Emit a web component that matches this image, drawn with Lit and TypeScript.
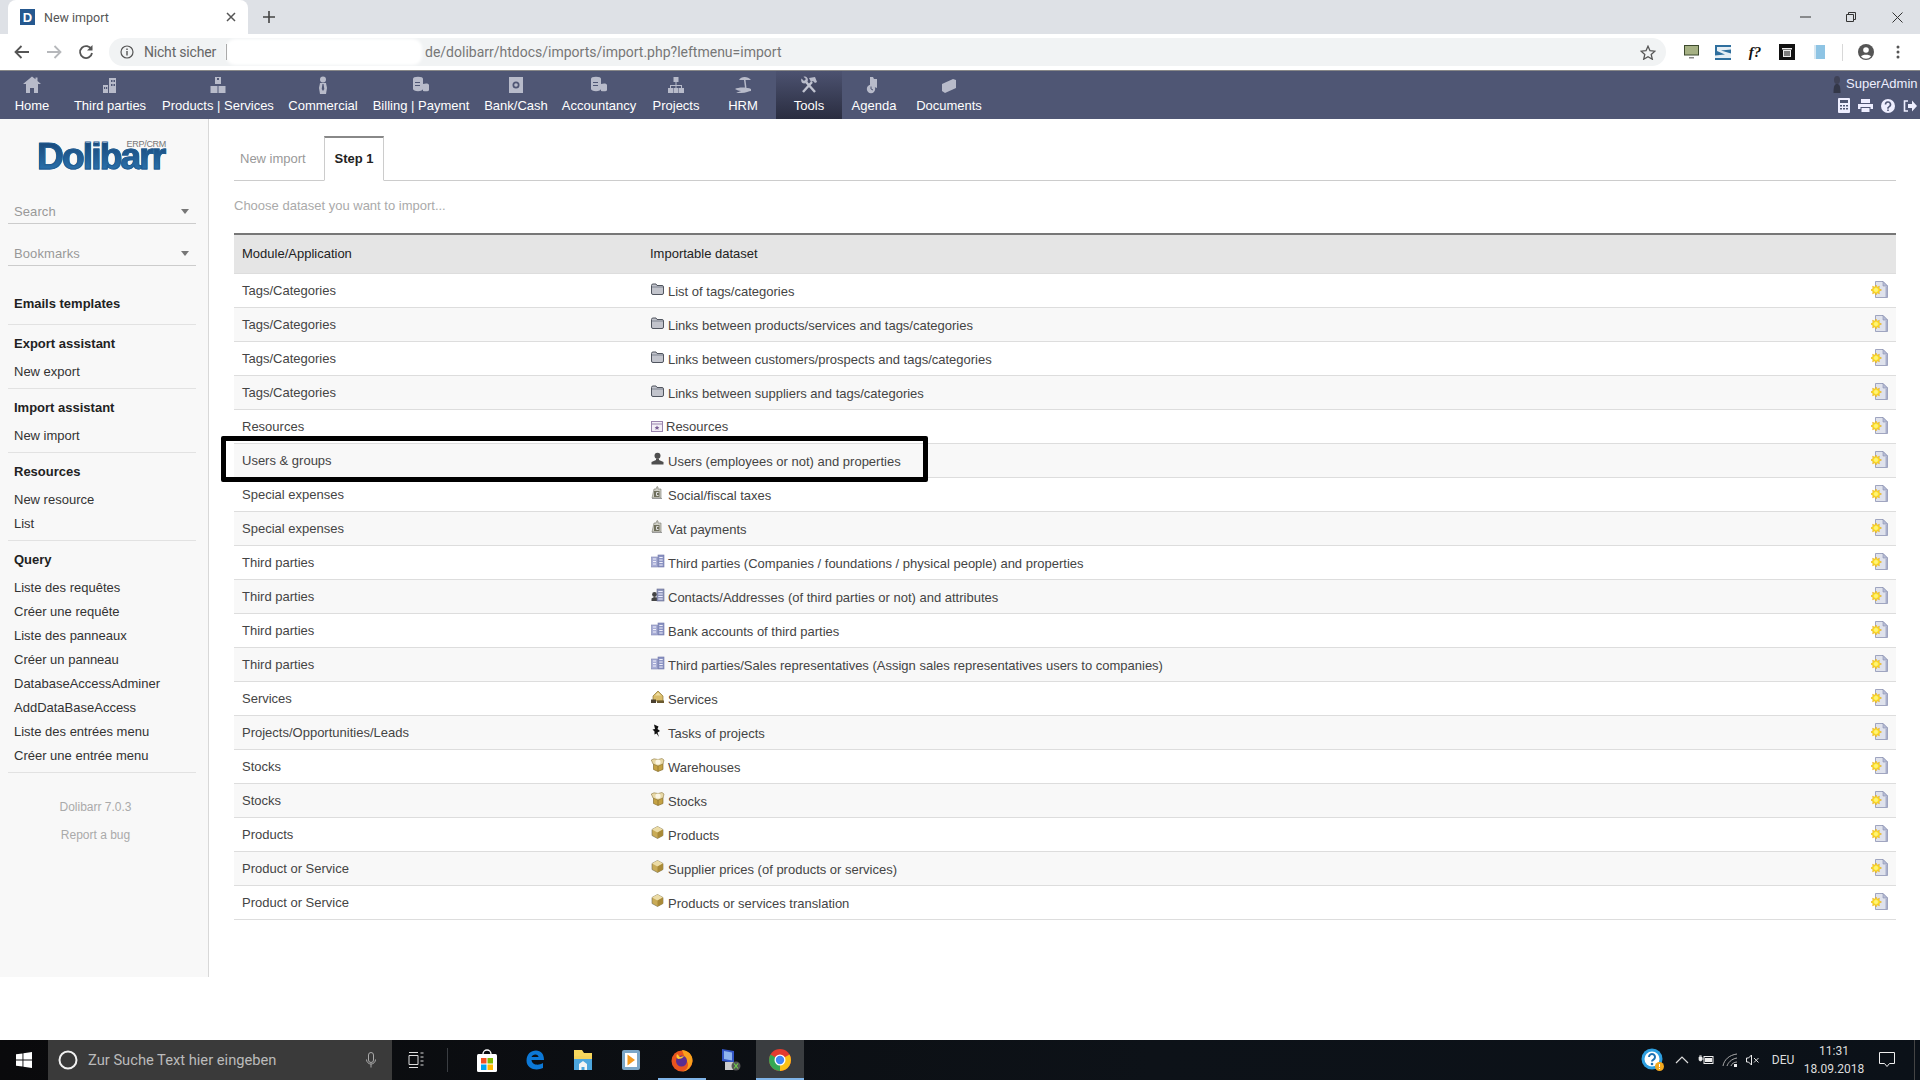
import { LitElement, html, css, svg } from "lit";
import { customElement } from "lit/decorators.js";

const navIcons: Record<string, any> = {
  home: svg`<path d="M9 .5 0 8h3v9h4v-5h4v5h4V8h3l-3.500-3V1.500h-2v1.800z"/>`,
  third: svg`<path d="M2 9h5v8H2zM8 2h7v15H8z"/><path fill="#4f5674" d="M10 4h1.500v2H10zM12.500 4H14v2h-1.500zM10 8h1.500v2H10zM12.500 8H14v2h-1.500zM3 11h1.200v2H3zM5 11h1.200v2H5z"/>`,
  products: svg`<path d="M6 1h6v7H6zM1.500 10h7v7h-7zM9.500 10h7v7h-7z"/><path fill="#4f5674" d="M8 2h2v2H8z"/>`,
  commercial: svg`<circle cx="9" cy="3.500" r="3"/><path d="M6 7h6l1 5-1 6H6l-1-6z"/><path fill="#4f5674" d="M8.500 8h1l.8 5-1.300 2-1.300-2z"/>`,
  billing: svg`<ellipse cx="6" cy="3" rx="5" ry="2.200"/><path d="M1 3v10c0 1.200 2.200 2.200 5 2.200s5-1 5-2.200V3z"/><path d="M11 8c3-1 6-.5 6 1v5c0 1.200-2.500 1.500-6 1z"/><path fill="#4f5674" d="M3 6h5v1H3zM3 9h5v1H3z"/>`,
  bank: svg`<path d="M2 1h14v16H2z"/><circle cx="9" cy="9" r="3.500" fill="#4f5674"/><circle cx="9" cy="9" r="1.800"/>`,
  projects: svg`<path d="M6.500 1h5v5h-5zM1 12h5v5H1zM6.500 12h5v5h-5zM12 12h5v5h-5zM8.500 6h1v3H15v3h-1V10H9.500v2h-1v-2H4v2H3V9h5.500z"/>`,
  hrm: svg`<path d="M5 4C7 0 14 0 17 4zM10 4h1.500l1 8H11zM1 13c3-2 12-2 16 0v2c-2 0-5 2-10 2H2c2-1 5-2 5-2-2 0-4-1-6-2z"/>`,
  tools: svg`<path d="M3 16 12 6" stroke="#c0c3d0" stroke-width="2.400" fill="none"/><path d="M9 2l6-1 2 5-2 1-2-2-2 1z"/><path d="M15 16 6 6" stroke="#c0c3d0" stroke-width="2.400" fill="none"/><path d="M1.500 2.500 4 5 6 3 3.500.8C6-.5 9 2 7.500 5.500 7 7 4 8 2.500 7 1 5.500 1 4 1.500 2.500z"/>`,
  agenda: svg`<path d="M5 1h3l1 2h3v9a5 5 0 0 0-7 2z"/><circle cx="6" cy="13" r="4.200"/><path fill="none" stroke="#4f5674" d="M6 10.500V13l2 1"/>`,
  documents: svg`<path d="M2 8 13 3l3 1v8L5 17l-3-2z"/><path fill="#4f5674" d="M8 3l3-1.500 2 1-5 2z"/>`,
};

const navItems = [
  ["Home", "home", 64], ["Third parties", "third", 92], ["Products | Services", "products", 124],
  ["Commercial", "commercial", 86], ["Billing | Payment", "billing", 110], ["Bank/Cash", "bank", 80],
  ["Accountancy", "billing", 86], ["Projects", "projects", 68], ["HRM", "hrm", 66], ["Tools", "tools", 66],
  ["Agenda", "agenda", 64], ["Documents", "documents", 86],
] as [string, string, number][];

const rowIcons: Record<string, any> = {
  folder: svg`<path d="M.5 3.500A1.500 1.500 0 0 1 2 2h3l1 1.500h5A1.500 1.500 0 0 1 12.500 5v6A1.500 1.500 0 0 1 11 12.500H2A1.500 1.500 0 0 1 .5 11z" fill="#c2c4cc" stroke="#50555f"/><path d="M1 5h11" stroke="#7f8490" fill="none"/>`,
  resource: svg`<rect x=".5" y="1.500" width="11" height="10" fill="#f3eef6" stroke="#9a84ae"/><path d="M.5 4h11" stroke="#9a84ae"/><path d="M6 5.500l.8 1.500 1.600.2-1.200 1 .4 1.600L6 9l-1.600.8.4-1.600-1.200-1 1.600-.2z" fill="#7b5e96"/>`,
  user: svg`<circle cx="6.500" cy="3.800" r="3" fill="#4f4f4f"/><path d="M5 6.500h3v1.500l4.500 2V12.500H.5V10L5 8z" fill="#4f4f4f"/>`,
  tax: svg`<path d="M3 3h2l1-2.500 1 .5V3h3v9H1z" fill="#cfcfc6" stroke="#77776c" stroke-width=".6"/><rect x="3" y="5" width="5.500" height="6" fill="#6f6f5c"/><path d="M7.500 6.500H5.500v3h2" fill="none" stroke="#ddd"/><path d="M1 12.500h10" stroke="#999"/>`,
  company: svg`<rect x=".5" y="3" width="6" height="10" fill="#a8add6" stroke="#7f85b3" stroke-width=".6"/><rect x="7" y="1" width="6" height="12" fill="#8c94c4" stroke="#6f75a8" stroke-width=".6"/><path d="M2 5h3M2 7.500h3M2 10h3M8.300 3.500h3.400M8.300 6h3.400M8.300 8.500h3.400M8.300 11h3.400" stroke="#f0f0fa"/>`,
  contact: svg`<circle cx="3.500" cy="6.500" r="2.400" fill="#444"/><path d="M.5 13v-2.500L3 9l3 .5V13z" fill="#444"/><rect x="6" y="1" width="7" height="12" fill="#8f96bb" stroke="#666c90" stroke-width=".6"/><path d="M7.300 3.500h4.400M7.300 6h4.400M7.300 8.500h4.400M7.300 11h4.400" stroke="#eef"/>`,
  service: svg`<path d="M2 6l5-5 5 5v5H2z" fill="#d9bc6a" stroke="#8c7430" stroke-width=".7"/><path d="M4 5.500l3-3 3 3z" fill="#f0dfa2"/><rect y="9.500" width="5" height="3.500" fill="#4a4030"/><rect x="6" y="10.500" width="7" height="2.500" fill="#6b5a30"/>`,
  pin: svg`<path d="M3 .5 7.500 2.500 6.500 5l2.500 2-2.500 1.500L8 13 5.500 9.500 3.500 10.500 3.500 7.500 1.500 5.500 4 5z" fill="#111"/>`,
  open: svg`<path d="M2.500 5.500h9.500v6L7 13.500l-4.500-2z" fill="#c4a244" stroke="#7a6222" stroke-width=".6"/><path d="M.3 2 3 .8 7 1.500 11 .5 13 2 12 6 7 8 2 6z" fill="#e8d9a8" stroke="#7a6222" stroke-width=".5"/><circle cx="7" cy="4" r="2.600" fill="#fbf6e4"/><path d="M7 8v5.500" stroke="#8a6f2a" stroke-width=".7"/>`,
  cube: svg`<path d="M6.500 .5l5.500 3v6l-5.500 3-5.500-3v-6z" fill="#c9ab56" stroke="#6f6a50" stroke-width=".6"/><path d="M1 3.500l5.500 3 5.500-3-5.500-3z" fill="#ecdca6"/><path d="M6.500 6.500v6l5.500-3v-6z" fill="#a98a38"/>`,
};

const rows: [string, string, string][] = [
  ["Tags/Categories", "folder", "List of tags/categories"],
  ["Tags/Categories", "folder", "Links between products/services and tags/categories"],
  ["Tags/Categories", "folder", "Links between customers/prospects and tags/categories"],
  ["Tags/Categories", "folder", "Links between suppliers and tags/categories"],
  ["Resources", "resource", "Resources"],
  ["Users & groups", "user", "Users (employees or not) and properties"],
  ["Special expenses", "tax", "Social/fiscal taxes"],
  ["Special expenses", "tax", "Vat payments"],
  ["Third parties", "company", "Third parties (Companies / foundations / physical people) and properties"],
  ["Third parties", "contact", "Contacts/Addresses (of third parties or not) and attributes"],
  ["Third parties", "company", "Bank accounts of third parties"],
  ["Third parties", "company", "Third parties/Sales representatives (Assign sales representatives users to companies)"],
  ["Services", "service", "Services"],
  ["Projects/Opportunities/Leads", "pin", "Tasks of projects"],
  ["Stocks", "open", "Warehouses"],
  ["Stocks", "open", "Stocks"],
  ["Products", "cube", "Products"],
  ["Product or Service", "cube", "Supplier prices (of products or services)"],
  ["Product or Service", "cube", "Products or services translation"],
];

const menu: { title: string; items: string[] }[] = [
  { title: "Emails templates", items: [] },
  { title: "Export assistant", items: ["New export"] },
  { title: "Import assistant", items: ["New import"] },
  { title: "Resources", items: ["New resource", "List"] },
  { title: "Query", items: ["Liste des requêtes", "Créer une requête", "Liste des panneaux", "Créer un panneau", "DatabaseAccessAdminer", "AddDataBaseAccess", "Liste des entrées menu", "Créer une entrée menu"] },
];

@customElement("app-root")
export class AppRoot extends LitElement {
  static styles = css`
    :host { display: block; width: 1920px; height: 1080px; overflow: hidden; background: #fff; font-family: "Liberation Sans", Arial, sans-serif; font-size: 13px; color: #444; }
    .page { display: flex; flex-direction: column; height: 1080px; }
    svg { display: block; }

    .strip { height: 34px; background: #dee1e6; display: flex; align-items: stretch; flex: none; padding-left: 8px; font-family: Roboto, sans-serif; }
    .tab { width: 240px; background: #fff; border-radius: 8px 8px 0 0; display: flex; align-items: center; padding: 0 12px; box-sizing: border-box; color: #555; font-size: 12.500px; }
    .fav { width: 15px; height: 16px; background: #25588f; color: #fff; font: bold 13px "Liberation Sans", sans-serif; display: flex; align-items: center; justify-content: center; margin-right: 9px; flex: none; }
    .tab-title { flex: 1; }
    .plus { width: 42px; display: flex; align-items: center; justify-content: center; }
    .winbtns { margin-left: auto; display: flex; align-items: center; }
    .winbtn { width: 46px; display: flex; justify-content: center; }

    .toolbar { height: 36px; background: #fff; display: flex; align-items: center; flex: none; padding-left: 6px; font-family: Roboto, sans-serif; }
    .slot { width: 32px; height: 28px; display: flex; align-items: center; justify-content: center; flex: none; }
    .fq { font: italic bold 15px "Liberation Serif", serif; color: #111; }
    .addr { position: relative; width: 1557px; height: 28px; margin-left: 7px; background: #f1f3f4; border-radius: 14px; display: flex; align-items: center; box-sizing: border-box; flex: none; font-size: 14px; color: #777; white-space: nowrap; }
    .addr .info { width: 35px; display: flex; justify-content: center; flex: none; }
    .addr .sec { width: 82px; flex: none; color: #666; letter-spacing: -0.2px; }
    .addr .url { margin-left: 199px; flex: 1; }
    .addr .star { width: 34px; display: flex; justify-content: center; flex: none; padding-right: 1px; }
    .smudge { position: absolute; left: 117px; top: 1px; width: 196px; height: 26px; background: #fff; border-radius: 9px; filter: blur(1.500px); }
    .sep { position: absolute; left: 117px; top: 6px; width: 1px; height: 16px; background: #aaa; }
    .exts { display: flex; margin-left: 9px; }
    .tdiv { width: 15px; display: flex; justify-content: center; flex: none; }
    .tdiv i { display: block; width: 1px; height: 17px; background: #d8d8d8; }

    .nav { height: 49px; flex: none; background: #4f5674; border-top: 1px solid #888; box-sizing: border-box; display: flex; color: #fff; font-size: 13px; }
    .nitem { display: flex; flex-direction: column; align-items: center; flex: none; height: 48px; padding-top: 5px; box-sizing: border-box; }
    .nitem.on { background: linear-gradient(#4c5270, #2a2d40); }
    .nitem svg { fill: #b8bbca; width: 18px; height: 18px; }
    .nitem span { margin-top: 3px; line-height: 18px; white-space: nowrap; }
    .nright { margin-left: auto; width: 87px; display: flex; flex-direction: column; padding-top: 3px; }
    .uname { display: flex; align-items: center; gap: 4px; height: 20px; line-height: 20px; white-space: nowrap; color: #eef; }
    .uname svg { flex: none; margin-left: -1px; }
    .ricons { display: flex; margin-top: 4px; align-items: center; gap: 8px; padding-left: 5px; }

    .body { flex: none; height: 858px; display: flex; }
    .side { width: 209px; flex: none; box-sizing: border-box; background: #f8f8f8; border-right: 1px solid #d8d8d8; }
    .logo { height: 28px; margin: 24px 0 0 37px; position: relative; width: 134px; }
    .logo b { display: block; font: bold 37px/28px "Liberation Sans", sans-serif; letter-spacing: -1.800px; background: linear-gradient(#1a4a7c, #2a72ad); -webkit-background-clip: text; background-clip: text; color: transparent; -webkit-text-stroke: 1px #1f5c92; white-space: nowrap; }
    .logo small { position: absolute; right: 5px; top: -3px; font-size: 9px; line-height: 9px; color: #777; letter-spacing: -0.3px; }
    .field { margin: 0 12px 0 8px; height: 25px; box-sizing: border-box; border-bottom: 1px solid #ccc; display: flex; align-items: center; justify-content: space-between; padding: 0 7px 0 6px; color: #999; letter-spacing: 0.1px; }
    .field.f1 { margin-top: 28px; }
    .field.f2 { margin-top: 17px; }
    .arrow { width: 0; height: 0; border-left: 4px solid transparent; border-right: 4px solid transparent; border-top: 5px solid #777; }
    .blocks { margin-top: 19px; }
    .block { margin: 0 12px 0 8px; padding: 7px 0 4px 6px; border-bottom: 1px solid #e2e2e2; color: #333; }
    .block.solo { padding-bottom: 8px; }
    .btitle { height: 24px; line-height: 24px; font-weight: bold; color: #222; }
    .bitems { margin-top: 4px; }
    .bitem { height: 24px; line-height: 24px; white-space: nowrap; }
    .foot { margin-top: 24px; text-align: center; color: #aaa; font-size: 12px; padding-right: 17px; }
    .foot div { height: 20px; line-height: 20px; margin-bottom: 8px; }

    .main { flex: 1; min-width: 0; padding: 17px 24px 0 25px; box-sizing: border-box; }
    .tabs { height: 45px; box-sizing: border-box; border-bottom: 1px solid #ccc; display: flex; }
    .t1 { width: 90px; padding-left: 6px; box-sizing: border-box; line-height: 45px; color: #999; }
    .t2 { width: 60px; height: 45px; box-sizing: border-box; border: 1px solid #ccc; border-top: 2px solid #888; border-bottom: 1px solid #fff; background: #fff; text-align: center; line-height: 41px; font-weight: bold; color: #222; }
    .desc { margin-top: 15px; height: 20px; line-height: 20px; color: #aaa; }
    .table { position: relative; margin-top: 17px; border-top: 2px solid #777; }
    .row { display: grid; grid-template-columns: 408px 1fr 38px; height: 34px; box-sizing: border-box; border-bottom: 1px solid #ddd; align-items: center; }
    .row.head { height: 39px; background: #e5e5e5; color: #222; padding-bottom: 2px; }
    .row.alt { background: #f8f8f8; }
    .row:last-of-type { border-bottom-color: #c4c4c4; }
    .cell { padding-left: 8px; white-space: nowrap; }
    .ds { display: flex; align-items: center; padding-left: 9px; padding-top: 2px; }
    .ds.resource { padding-top: 0; }
    .head .ds { padding-top: 0; padding-left: 8px; }
    .ic { width: 13px; height: 13px; margin-right: 4px; flex: none; transform: translateY(-3px); overflow: visible; }
    .ic.resource { margin-right: 2px; transform: translateY(0); }
    .act { display: flex; padding-left: 13px; }
    .act svg { margin-top: -3px; }
    .mark { position: absolute; left: -13px; top: 201px; width: 707px; height: 46px; box-sizing: border-box; border: 5px solid #000; border-radius: 2px; }

    .gap { flex: 1; background: #fff; }
    .task { height: 40px; flex: none; background: linear-gradient(90deg, #0a0a0c, #0d1218 60%, #0b1118); display: flex; align-items: stretch; color: #ddd; font-family: Roboto, sans-serif; }
    .ts { width: 48px; display: flex; align-items: center; justify-content: center; flex: none; }
    .search { width: 344px; flex: none; background: #3a3a3a; display: flex; align-items: center; box-sizing: border-box; color: #bbb; font-size: 14.700px; }
    .search .c { width: 40px; display: flex; justify-content: center; flex: none; }
    .search .t { flex: 1; }
    .search .m { width: 42px; display: flex; justify-content: center; flex: none; }
    .tbd { width: 15px; display: flex; align-items: center; justify-content: center; flex: none; }
    .tbd i { display: block; width: 1px; height: 24px; background: #3a3d42; }
    .ts.first { margin-left: 8px; }
    .ts.ff { margin-left: 3px; box-shadow: inset 0 -2px 0 #7fb4e8; }
    .ts.net { margin-left: 1px; }
    .ts.cr { margin-left: 1px; background: #3a3d40; box-shadow: inset 0 -2px 0 #7fb4e8; }
    .tray { margin-left: auto; display: flex; align-items: stretch; font-size: 12px; }
    .tr { display: flex; align-items: center; justify-content: center; flex: none; }
    .w20 { width: 20px; }
    .w22 { width: 22px; }
    .w26 { width: 26px; }
    .w32 { width: 32px; }
    .w40 { width: 40px; }
    .w44 { width: 44px; }
    .clock { width: 62px; flex-direction: column; line-height: 18px; font-size: 12px; text-align: center; }
    .edge { width: 11px; display: flex; justify-content: center; }
    .edge i { display: block; width: 1px; height: 40px; background: #444; }
  `;

  private action() {
    return html`<svg width="17" height="17" viewBox="0 0 17 17"><path d="M4.500.5h7.500l4.500 4.500v11.500H4.500z" fill="#dfe2ec" stroke="#8c92b2" stroke-width=".8"/><path d="M12 .5v4.500h4.500z" fill="#b8bed6" stroke="#8c92b2" stroke-width=".6"/><path d="M14.500 5.500v10.500h1.500V5.500z" fill="#aab0cc"/><path d="M5 4l1.100 2.300 2.300-1-.5 2.300L10.500 9 7.900 10.400l.5 2.300-2.300-1L5 14l-1.100-2.300-2.300 1 .5-2.300L-.5 9l2.600-1.400-.5-2.300 2.300 1z" fill="#fce22c" stroke="#e8a818" stroke-width=".6"/><circle cx="5" cy="9" r="2" fill="#fff27a"/></svg>`;
  }

  private ico(w: number, h: number, body: any) {
    return html`<svg width=${w} height=${h} viewBox="0 0 ${w} ${h}">${body}</svg>`;
  }

  render() {
    return html`<div class="page">
      <div class="strip">
        <div class="tab">
          <div class="fav">D</div>
          <div class="tab-title">New import</div>
          ${this.ico(10, 10, svg`<path d="M1 1l8 8M9 1l-8 8" stroke="#555" stroke-width="1.500"/>`)}
        </div>
        <div class="plus">${this.ico(12, 12, svg`<path d="M6 0v12M0 6h12" stroke="#444" stroke-width="1.600"/>`)}</div>
        <div class="winbtns">
          <div class="winbtn">${this.ico(11, 2, svg`<path d="M0 1h11" stroke="#333"/>`)}</div>
          <div class="winbtn">${this.ico(10, 10, svg`<path d="M.5 2.500h7v7h-7zM2.500 2.500v-2h7v7h-2" fill="none" stroke="#333"/>`)}</div>
          <div class="winbtn">${this.ico(11, 11, svg`<path d="M.5.500l10 10M10.500.500l-10 10" stroke="#333"/>`)}</div>
        </div>
      </div>

      <div class="toolbar">
        <div class="slot">${this.ico(16, 14, svg`<path d="M15 7H2M7.500 1 1.500 7l6 6" fill="none" stroke="#555" stroke-width="1.800"/>`)}</div>
        <div class="slot">${this.ico(16, 14, svg`<path d="M1 7h13M8.500 1l6 6-6 6" fill="none" stroke="#b6b8bb" stroke-width="1.800"/>`)}</div>
        <div class="slot">${this.ico(16, 16, svg`<path d="M13.500 5.500A6 6 0 1 0 14 9" fill="none" stroke="#555" stroke-width="1.800"/><path d="M14.500 1v5.500H9z" fill="#555"/>`)}</div>
        <div class="addr">
          <div class="info">${this.ico(14, 14, svg`<circle cx="7" cy="7" r="6" fill="none" stroke="#555" stroke-width="1.200"/><path d="M7 6v4.500M7 3.500v1.400" stroke="#555" stroke-width="1.400"/>`)}</div>
          <div class="sec">Nicht sicher</div>
          <div class="url">de/dolibarr/htdocs/imports/import.php?leftmenu=import</div>
          <div class="star">${this.ico(16, 15, svg`<path d="M8 1.200l2 4.500 4.900.5-3.700 3.200 1.100 4.800L8 11.700l-4.300 2.500 1.100-4.800L1.100 6.200 6 5.700z" fill="none" stroke="#555" stroke-width="1.300"/>`)}</div>
          <div class="smudge"></div>
          <div class="sep"></div>
        </div>
        <div class="exts">
          <div class="slot">${this.ico(15, 14, svg`<rect width="15" height="10.500" fill="#3d4a2e"/><rect x="1" y="1" width="13" height="8.500" fill="#a6b184"/><path d="M5 12h5v1.500H5z" fill="#888"/>`)}</div>
          <div class="slot">${this.ico(16, 15, svg`<rect width="16" height="15" fill="#2f6f9e"/><path d="M2 2h14v2.500L6 5.500l10 3V13H0v-2.500l10-1L2 6z" fill="#e6eef4"/>`)}</div>
          <div class="slot"><span class="fq">f?</span></div>
          <div class="slot">${this.ico(16, 16, svg`<rect width="16" height="16" fill="#111"/><path d="M3 4h10v1.400H3zM4 6h8v7H4z" fill="#eee"/><path d="M6 7v5M8 7v5M10 7v5" stroke="#111"/>`)}</div>
          <div class="slot">${this.ico(11, 14, svg`<rect width="11" height="14" fill="#8ec4e4"/><rect width="2" height="14" fill="#d8e8f2"/>`)}</div>
        </div>
        <div class="tdiv"><i></i></div>
        <div class="slot">${this.ico(16, 16, svg`<circle cx="8" cy="8" r="8" fill="#555"/><circle cx="8" cy="6" r="2.800" fill="#fff"/><path d="M3 12.500c1-2.500 9-2.500 10 0A6.500 6.500 0 0 1 3 12.500z" fill="#fff"/>`)}</div>
        <div class="slot">${this.ico(4, 14, svg`<circle cx="2" cy="2" r="1.500" fill="#555"/><circle cx="2" cy="7" r="1.500" fill="#555"/><circle cx="2" cy="12" r="1.500" fill="#555"/>`)}</div>
      </div>

      <div class="nav">
        ${navItems.map(([label, ic, w]) => html`<div class="nitem ${label === "Tools" ? "on" : ""}" style="width:${w}px">
          <svg viewBox="0 0 18 18">${navIcons[ic]}</svg><span>${label}</span></div>`)}
        <div class="nright">
          <div class="uname">${this.ico(10, 17, svg`<ellipse cx="5" cy="4" rx="3" ry="4" fill="#3f4256"/><path d="M1.500 17c0-7 1-9 3.500-9s3.500 2 3.500 9z" fill="#333748"/>`)}<span>SuperAdmin</span></div>
          <div class="ricons">
            ${this.ico(12, 15, svg`<rect width="12" height="15" rx="1" fill="#eef"/><path d="M2 2h8v3H2zM2 7h2v1.500H2zM5 7h2v1.500H5zM8 7h2v1.500H8zM2 10h2v1.500H2zM5 10h2v1.500H5zM8 10h2v1.500H8z" fill="#4f5674"/>`)}
            ${this.ico(15, 13, svg`<path d="M3 0h9v4H3zM0 5h15v5h-2.500V8h-10v2H0zM3.500 9h8v4h-8z" fill="#eef"/>`)}
            ${this.ico(14, 14, svg`<circle cx="7" cy="7" r="7" fill="#eef"/><path d="M4.500 5.500a2.500 2.500 0 1 1 3.500 2.300L7 8.800v1" fill="none" stroke="#4f5674" stroke-width="1.600"/><path d="M6.200 10.600h1.600V12H6.200z" fill="#4f5674"/>`)}
            ${this.ico(14, 12, svg`<path d="M5 1H1.500v10H5" fill="none" stroke="#eef" stroke-width="1.600"/><path d="M5 4h4V.5L14 6l-5 5.500V8H5z" fill="#eef"/>`)}
          </div>
        </div>
      </div>

      <div class="body">
        <div class="side">
          <div class="logo"><b>Dolibarr</b><small>ERP/CRM</small></div>
          <div class="field f1"><span>Search</span><div class="arrow"></div></div>
          <div class="field f2"><span>Bookmarks</span><div class="arrow"></div></div>
          <div class="blocks">
            ${menu.map((m) => html`<div class="block ${m.items.length ? "" : "solo"}">
              <div class="btitle">${m.title}</div>
              ${m.items.length ? html`<div class="bitems">${m.items.map((i) => html`<div class="bitem">${i}</div>`)}</div>` : ""}
            </div>`)}
          </div>
          <div class="foot"><div>Dolibarr 7.0.3</div><div>Report a bug</div></div>
        </div>
        <div class="main">
          <div class="tabs"><div class="t1">New import</div><div class="t2">Step 1</div></div>
          <div class="desc">Choose dataset you want to import...</div>
          <div class="table">
            <div class="row head"><div class="cell">Module/Application</div><div class="cell ds">Importable dataset</div><div></div></div>
            ${rows.map(([m, ic, d], i) => html`<div class="row ${i % 2 ? "alt" : ""}">
              <div class="cell">${m}</div>
              <div class="cell ds ${ic}"><svg class="ic ${ic}" viewBox="0 0 13 13">${rowIcons[ic]}</svg><span>${d}</span></div>
              <div class="act">${this.action()}</div>
            </div>`)}
            <div class="mark"></div>
          </div>
        </div>
      </div>

      <div class="gap"></div>

      <div class="task">
        <div class="ts">${this.ico(16, 16, svg`<path d="M0 2.300 6.500 1.400v6.200H0zM7.400 1.300 16 0v7.600H7.400zM0 8.400h6.500v6.200L0 13.700zM7.400 8.400H16V16l-8.600-1.300z" fill="#fff"/>`)}</div>
        <div class="search">
          <div class="c">${this.ico(20, 20, svg`<circle cx="10" cy="10" r="8.500" fill="none" stroke="#f2f2f2" stroke-width="2"/>`)}</div>
          <div class="t">Zur Suche Text hier eingeben</div>
          <div class="m">${this.ico(10, 16, svg`<rect x="2.500" y=".5" width="5" height="10" rx="2.500" fill="none" stroke="#aaa"/><path d="M.5 7.500a4.500 4.500 0 0 0 9 0M5 12v3.500" fill="none" stroke="#aaa"/>`)}</div>
        </div>
        <div class="ts">${this.ico(16, 16, svg`<path d="M1 3.500h9v9H1zM1 .5h9M1 15.500h9M12.500 1h3M12.500 5h3M12.500 9h3M12.500 13h3" fill="none" stroke="#ddd"/>`)}</div>
        <div class="tbd"><i></i></div>
        <div class="ts first">${this.ico(24, 26, svg`<path d="M8 7a4 4 0 0 1 8 0" fill="none" stroke="#fff" stroke-width="1.300"/><rect x="2" y="7" width="20" height="18" rx="1.500" fill="#fff"/><rect x="6" y="11" width="5.500" height="5.500" fill="#f25022"/><rect x="12.500" y="11" width="5.500" height="5.500" fill="#7fba00"/><rect x="6" y="17.500" width="5.500" height="5.500" fill="#00a4ef"/><rect x="12.500" y="17.500" width="5.500" height="5.500" fill="#ffb900"/>`)}</div>
        <div class="ts">${this.ico(22, 24, svg`<path d="M2.500 12.500C2.500 6 7 2.500 12 2.500c5 0 8 3.500 8 9.500H7.500c.3 5 7 6 11.500 3v5c-6 3-16.500 1.500-16.500-7.500zM7.500 9h7c0-3.500-6-3.500-7 0z" fill="#0c78d6"/>`)}</div>
        <div class="ts">${this.ico(22, 24, svg`<path d="M2 2h8l2 3h8v6H2z" fill="#f6d75e"/><rect x="2" y="8" width="18" height="14" fill="#f8e08a"/><rect x="2" y="10" width="18" height="12" fill="#4da6dd"/><path d="M7 22v-6l4-3 4 3v6h-2.500v-3h-3v3z" fill="#f4f4f4"/><rect x="2" y="8" width="18" height="3" fill="#f3d25a"/>`)}</div>
        <div class="ts">${this.ico(20, 24, svg`<rect x="1" y="2" width="18" height="20" rx="2" fill="#7aa6c8"/><rect x="4" y="5" width="12" height="14" fill="#fff"/><path d="M6.500 6.500v11L14 12z" fill="#f39a1f"/>`)}</div>
        <div class="ts ff">${this.ico(24, 26, svg`<circle cx="12" cy="14" r="10.500" fill="#e8541e"/><path d="M12 3c6 0 11 5 10.500 11S16 25 12 24.500c5-1 7-5 5.500-9-.5-2-2-3-2-3z" fill="#f9a01c"/><circle cx="11.500" cy="14" r="5.500" fill="#5a2d91"/><path d="M7 7l3 3 4-1c-1 2-3 3-6 3-1.500-1-2-3-1-5z" fill="#fdc72f"/>`)}</div>
        <div class="ts net">${this.ico(22, 26, svg`<path d="M2 2l12 2v12L2 14z" fill="#3355c4"/><path d="M4 4l8 1.500v8L4 12z" fill="#8fb4ee"/><rect x="5" y="15" width="9" height="8" fill="#ccc"/><circle cx="16" cy="19" r="4.500" fill="#555"/><path d="M14 16.500l4 5M18 16.500l-4 5" stroke="#6fd14a" stroke-width="1.200"/>`)}</div>
        <div class="ts cr">${this.ico(24, 24, svg`<circle cx="12" cy="12" r="11" fill="#e33b2e"/><path d="M12 12 21.500 6.500A11 11 0 0 1 12 23z" fill="#fbc116"/><path d="M12 12 12 23A11 11 0 0 1 2.500 6.500z" fill="#34a853"/><circle cx="12" cy="12" r="5.500" fill="#fff"/><circle cx="12" cy="12" r="4.200" fill="#4285f4"/>`)}</div>
        <div class="tray">
          <div class="tr w32">${this.ico(24, 24, svg`<circle cx="11" cy="11" r="10.500" fill="#2e9fe0"/><circle cx="11" cy="11" r="7.500" fill="#fff"/><path d="M8 9a3 3 0 1 1 4.500 2.600c-1 .6-1.500 1-1.500 2" fill="none" stroke="#1c6fb0" stroke-width="2"/><circle cx="11" cy="16" r="1.300" fill="#1c6fb0"/><circle cx="18.500" cy="18.500" r="4.500" fill="#f3a81d"/><path d="M18.500 16v3M18.500 20v1" stroke="#fff"/>`)}</div>
          <div class="tr w26">${this.ico(14, 8, svg`<path d="M1 7l6-6 6 6" fill="none" stroke="#ddd" stroke-width="1.200"/>`)}</div>
          <div class="tr w22">${this.ico(16, 10, svg`<rect x="6" y="1.500" width="9" height="7" fill="none" stroke="#eee"/><rect x="7" y="3" width="7" height="4" fill="#eee"/><path d="M1 2v2.500a1.500 1.500 0 0 0 3 0V2zM2 0v2M3 0v2M4 4h2" fill="#eee" stroke="#eee" stroke-width=".7"/>`)}</div>
          <div class="tr w26">${this.ico(16, 14, svg`<path d="M1 13C2 7 7 2 15 1M5 13c1-3 4-7 10-8M9 13c.5-2 3-4 6-4" fill="none" stroke="#aaa"/><path d="M12 11h3v3h-3z" fill="#eee"/>`)}</div>
          <div class="tr w20">${this.ico(14, 12, svg`<path d="M.5 4v4h2l3 3V1l-3 3z" fill="none" stroke="#eee"/><path d="M8 4l4.500 4.500M12.500 4 8 8.500" stroke="#ddd"/>`)}</div>
          <div class="tr w40">DEU</div>
          <div class="tr clock"><div>11:31</div><div>18.09.2018</div></div>
          <div class="tr w44">${this.ico(16, 16, svg`<path d="M.5.500h15v11h-5l-2.500 3-2.500-3h-5z" fill="none" stroke="#eee"/>`)}</div>
          <div class="edge"><i></i></div>
        </div>
      </div>
    </div>`;
  }
}
